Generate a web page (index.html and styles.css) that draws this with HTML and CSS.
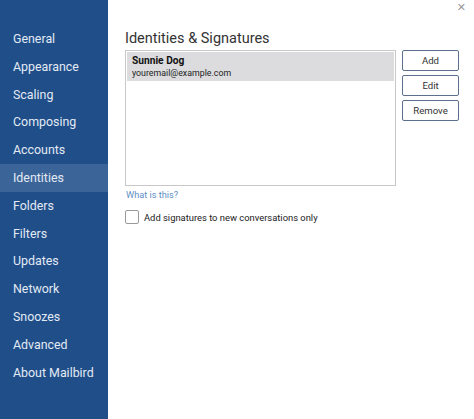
FILE: index.html
```html
<!DOCTYPE html>
<html lang="en">
<head>
  <meta charset="UTF-8">
  <title>Mailbird Settings - Identities</title>
  <link rel="stylesheet" href="styles.css">
</head>
<body>
  <div class="window">
    <nav class="sidebar">
      <div class="nav-item">General</div>
      <div class="nav-item">Appearance</div>
      <div class="nav-item">Scaling</div>
      <div class="nav-item">Composing</div>
      <div class="nav-item">Accounts</div>
      <div class="nav-item active">Identities</div>
      <div class="nav-item">Folders</div>
      <div class="nav-item">Filters</div>
      <div class="nav-item">Updates</div>
      <div class="nav-item">Network</div>
      <div class="nav-item">Snoozes</div>
      <div class="nav-item">Advanced</div>
      <div class="nav-item">About Mailbird</div>
    </nav>

    <main class="content">
      <span class="close">&#x2715;</span>
      <h2 class="title">Identities &amp; Signatures</h2>

      <div class="identities">
        <div class="list">
          <div class="list-item selected">
            <div class="name">Sunnie Dog</div>
            <div class="email">youremail@example.com</div>
          </div>
        </div>
        <div class="buttons">
          <button class="btn">Add</button>
          <button class="btn">Edit</button>
          <button class="btn">Remove</button>
        </div>
      </div>

      <a class="help-link" href="#">What is this?</a>

      <label class="check-row">
        <span class="checkbox"></span>
        Add signatures to new conversations only
      </label>
    </main>
  </div>
</body>
</html>
```

FILE: styles.css
```css
* {
  margin: 0;
  padding: 0;
  box-sizing: border-box;
}

body {
  font-family: Roboto, "Open Sans", sans-serif;
  background: #fff;
  color: #333;
}

.window {
  display: flex;
  width: 474px;
  height: 419px;
}

.sidebar {
  width: 109px;
  background: #1f4e89;
  padding-top: 25px;
  display: flex;
  flex-direction: column;
}

.nav-item {
  height: 27.8px;
  line-height: 27.8px;
  padding-left: 13px;
  font-size: 12.4px;
  color: #e3eaf4;
  white-space: nowrap;
}

.nav-item.active {
  background: #3b6599;
}

.content {
  flex: 1;
  position: relative;
  padding: 29px 15px 0 16px;
}

.close {
  position: absolute;
  top: 1px;
  right: 8px;
  font-family: "DejaVu Sans", sans-serif;
  font-size: 11px;
  color: #999;
}

.title {
  font-size: 14.5px;
  line-height: 20px;
  font-weight: normal;
  color: #333;
  margin-left: 1px;
  margin-bottom: 1px;
}

.identities {
  display: flex;
  gap: 6px;
  margin-left: 1px;
}

.list {
  width: 271px;
  height: 136px;
  border: 1px solid #c8c8c8;
  padding: 1px;
}

.list-item.selected {
  background: #dcdcde;
  padding: 2px 5px;
}

.name {
  font-size: 10.2px;
  line-height: 13px;
  font-weight: bold;
  color: #111;
}

.email {
  font-size: 8.8px;
  line-height: 12px;
  color: #222;
}

.buttons {
  display: flex;
  flex-direction: column;
  gap: 4px;
}

.btn {
  width: 57px;
  height: 21px;
  background: #fff;
  border: 1px solid #5c6f8c;
  border-radius: 2px;
  font-family: inherit;
  font-size: 9.6px;
  color: #333;
}

.help-link {
  display: block;
  margin-top: 3px;
  margin-left: 2px;
  font-size: 9.2px;
  line-height: 12px;
  color: #5f8fc6;
  text-decoration: none;
}

.check-row {
  display: flex;
  align-items: center;
  gap: 5px;
  margin-top: 9px;
  margin-left: 1px;
  font-size: 9.4px;
  color: #222;
}

.checkbox {
  width: 14px;
  height: 14px;
  border: 1px solid #9a9a9a;
  border-radius: 2px;
  background: #fff;
}
```
